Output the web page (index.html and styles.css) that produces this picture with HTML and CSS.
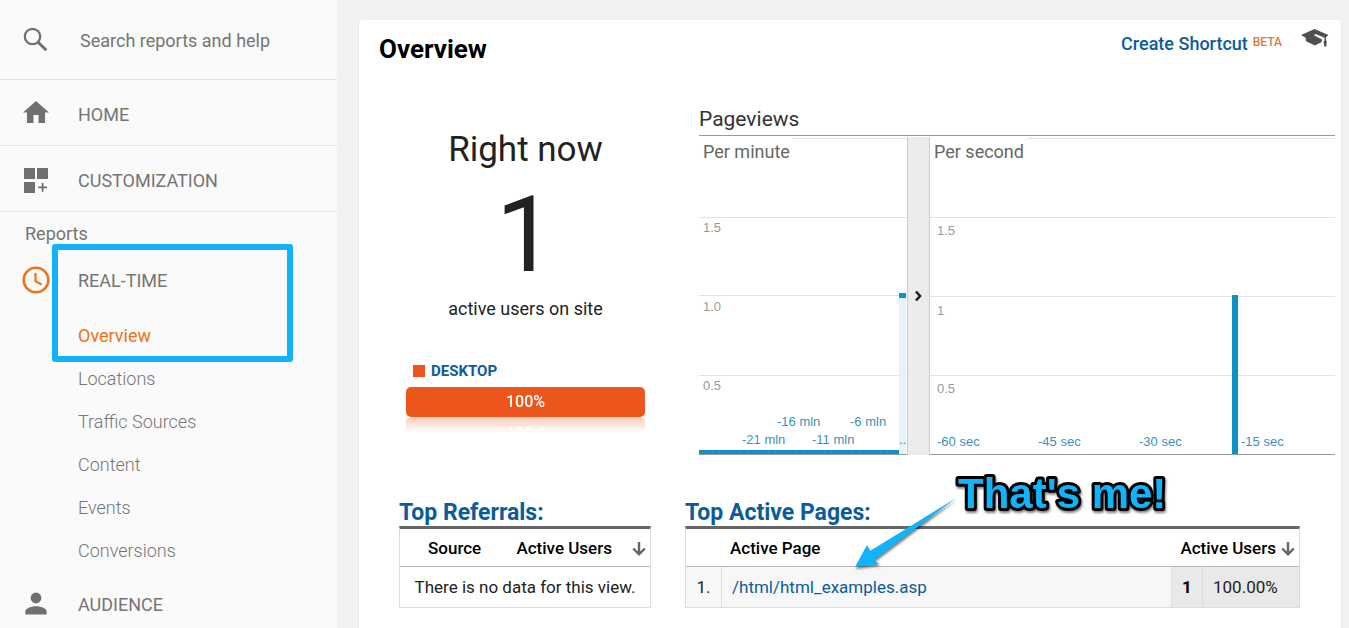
FILE: index.html
```
<!DOCTYPE html>
<html lang="en">
<head>
<meta charset="utf-8">
<title>Overview</title>
<link rel="stylesheet" href="styles.css">
</head>
<body>
<div class="app">
  <aside class="sidebar">
    <label class="search">
      <svg class="icon" viewBox="0 0 28 28" aria-hidden="true"><circle cx="10.500" cy="10.500" r="7.700" fill="none" stroke="currentColor" stroke-width="2.300"/><path d="M16 16L24.300 24.300" stroke="currentColor" stroke-width="3"/></svg>
      <input class="search-input" type="text" placeholder="Search reports and help" aria-label="Search reports and help">
    </label>
    <nav>
      <a class="nav-item ruled" href="#">
        <svg class="icon" viewBox="0 0 28 28" aria-hidden="true"><path d="M14 1L1 12.500h4V23h6.500v-8h5v8H23V12.500h4z" fill="currentColor"/></svg>
        HOME
      </a>
      <a class="nav-item ruled" href="#">
        <svg class="icon" viewBox="0 0 28 28" aria-hidden="true"><path d="M2 2h11v11H2zM15 2h11v11H15zM2 16h11v11H2zM19.700 17h1.800v3.500H25v1.800h-3.500v3.500h-1.800v-3.500h-3.500v-1.800h3.500z" fill="currentColor"/></svg>
        CUSTOMIZATION
      </a>
      <h2 class="nav-heading">Reports</h2>
      <div class="nav-group">
        <a class="nav-item realtime" href="#">
          <svg class="icon icon-active" viewBox="0 0 28 28" aria-hidden="true"><circle cx="14" cy="14" r="12.300" fill="none" stroke="currentColor" stroke-width="2.600"/><path d="M13.500 7v8.200l6 3.300" fill="none" stroke="currentColor" stroke-width="2.200"/></svg>
          REAL-TIME
        </a>
        <a class="sub-item current" href="#">Overview</a>
        <span class="highlight"></span>
      </div>
      <a class="sub-item" href="#">Locations</a>
      <a class="sub-item" href="#">Traffic Sources</a>
      <a class="sub-item" href="#">Content</a>
      <a class="sub-item" href="#">Events</a>
      <a class="sub-item" href="#">Conversions</a>
      <a class="nav-item audience" href="#">
        <svg class="icon" viewBox="0 0 28 28" aria-hidden="true"><circle cx="14" cy="8" r="5.400" fill="currentColor"/><path d="M3.300 24.500v-3c0-3.600 7.200-5.300 10.700-5.300s10.700 1.700 10.700 5.300v3z" fill="currentColor"/></svg>
        AUDIENCE
      </a>
    </nav>
  </aside>

  <main class="card">
    <header class="card-head">
      <h1 class="title">Overview</h1>
      <a class="shortcut" href="#">Create Shortcut</a>
      <span class="beta">BETA</span>
      <svg class="cap" viewBox="0 0 28 20" aria-hidden="true"><path d="M13.500 1L27.500 7l-2.500 2.300v3.200c1 .5 1 1.500.5 2.500v3.500h-2.200l-.5-3.500c-.5-1 0-2 .7-2.500V9.800L14.500 6l-1.500 1.200 8 4.300-.3 2.500-6.700 3.500-9-4.300-.3-3.400L0 7z" fill="#505050"/></svg>
    </header>

    <div class="summary">
      <section class="now">
        <p class="now-label">Right now</p>
        <p class="now-count">1</p>
        <p class="now-note">active users on site</p>
        <a class="device" href="#"><span class="swatch"></span>DESKTOP</a>
        <div class="bar">100%</div>
      </section>

      <section class="pageviews">
        <h2 class="chart-title">Pageviews</h2>
        <div class="charts">
          <svg class="plot-minute" viewBox="0 0 208 318">
            <path class="grid" d="M93 1.500H208M0 80.500H208M0 158.500H208M0 238.500H208"/>
            <text class="plot-title" x="4" y="21">Per minute</text>
            <text class="tick" x="4" y="95">1.5</text>
            <text class="tick" x="4" y="174">1.0</text>
            <text class="tick" x="4" y="253">0.5</text>
            <rect x="200" y="156" width="7" height="161" fill="#e4f2f9"/>
            <rect x="200" y="156" width="7" height="5" fill="#1090c5"/>
            <text class="time" x="78" y="289">-16 mln</text>
            <text class="time" x="151" y="289">-6 mln</text>
            <text class="time" x="43" y="307">-21 mln</text>
            <text class="time" x="113" y="307">-11 mln</text>
            <text class="time" x="200" y="307">..</text>
            <rect x="0" y="313" width="200" height="4" fill="#1090c5"/>
            <path d="M6 315H200" fill="none" stroke="#2498c9" stroke-width="3" stroke-dasharray="1 6"/>
            <path class="axis" d="M0 317.500H208"/>
          </svg>
          <button class="divider" type="button" aria-label="Collapse minute chart"><svg class="chevron" viewBox="0 0 8 12" aria-hidden="true"><path d="M1 1.500L5 6L1 10.500" fill="none" stroke="#222" stroke-width="2.600"/></svg></button>
          <svg class="plot-second" viewBox="0 0 405 318">
            <path class="grid" d="M97 1.500H405M0 80.500H405M0 159.500H405M0 238.500H405"/>
            <text class="plot-title" x="4" y="21">Per second</text>
            <text class="tick" x="7" y="98">1.5</text>
            <text class="tick" x="7" y="178">1</text>
            <text class="tick" x="7" y="256">0.5</text>
            <rect x="302" y="158" width="6" height="160" fill="#1090c5"/>
            <text class="time" x="7" y="309">-60 sec</text>
            <text class="time" x="108" y="309">-45 sec</text>
            <text class="time" x="209" y="309">-30 sec</text>
            <text class="time" x="311" y="309">-15 sec</text>
            <path class="axis" d="M0 317.500H405"/>
          </svg>
        </div>
      </section>
    </div>

    <div class="tables">
      <section>
        <h2 class="table-title">Top Referrals:</h2>
        <table class="table">
          <thead>
            <tr>
              <th class="source">Source</th>
              <th class="users">Active Users<svg class="sort" viewBox="0 0 14 14" aria-hidden="true"><path d="M7 0v12M1.200 6.500L7 12.300L12.800 6.500" fill="none" stroke="#666" stroke-width="2.400"/></svg></th>
            </tr>
          </thead>
          <tbody><tr><td class="empty" colspan="2">There is no data for this view.</td></tr></tbody>
        </table>
      </section>
      <section class="active-pages">
        <h2 class="table-title">Top Active Pages:</h2>
        <table class="table">
          <thead>
            <tr>
              <th class="rank"></th>
              <th class="page">Active Page</th>
              <th class="users" colspan="2">Active Users<svg class="sort" viewBox="0 0 14 14" aria-hidden="true"><path d="M7 0v12M1.200 6.500L7 12.300L12.800 6.500" fill="none" stroke="#666" stroke-width="2.400"/></svg></th>
            </tr>
          </thead>
          <tbody>
            <tr>
              <td class="rank">1.</td>
              <td class="page"><a href="#">/html/html_examples.asp</a></td>
              <td class="count">1</td>
              <td class="percent">100.00%</td>
            </tr>
          </tbody>
        </table>
        <svg class="callout" viewBox="0 0 350 110">
          <path class="callout-arrow" d="M115 32L33 94L38 98L14 101L26 79L29 85Z"/>
          <text class="callout-text" x="117" y="42">That's me!</text>
        </svg>
      </section>
    </div>
  </main>
</div>
</body>
</html>
```
FILE: styles.css
```
* { box-sizing: border-box; }
body {
  margin: 0;
  background: #f1f1f1;
  color: #222;
  font-family: Roboto, "Liberation Sans", sans-serif;
  font-size: 17px;
}
h1, h2, p { margin: 0; font-weight: 400; }
a { color: inherit; text-decoration: none; }

.app { display: flex; height: 100vh; overflow: hidden; }

/* Sidebar */
.sidebar { flex: 0 0 337px; background: #fafafa; color: #757575; font-size: 18px; }
.search, .nav-item { display: flex; align-items: center; gap: 28px; padding-left: 22px; }
.search { height: 80px; padding-top: 1px; border-bottom: 1px solid #e3e3e3; }
.search-input {
  flex: 1;
  min-width: 0;
  padding: 0 0 0 2px;
  border: 0;
  background: none;
  color: #757575;
  font: inherit;
}
.search-input::placeholder { color: #757575; opacity: 1; }
.icon { flex: none; width: 28px; height: 28px; color: #707070; }
.icon-active { color: #ef7215; }
.ruled { height: 66px; padding-top: 3px; border-bottom: 1px solid #e3e3e3; }
.nav-heading { padding: 12px 0 0 25px; font-size: 18px; line-height: 20px; }
.nav-group { position: relative; }
.realtime { height: 70px; padding-top: 2px; }
.sub-item { display: block; padding-left: 78px; font-weight: 300; line-height: 43px; }
.current { color: #ef7215; font-weight: 400; }
.audience { height: 64px; }
.highlight {
  position: absolute;
  top: 0;
  left: 52px;
  width: 241px;
  height: 118px;
  border: 6px solid #12b3fd;
  border-radius: 3px;
}

/* Card */
.card {
  flex: 1;
  min-width: 0;
  margin: 20px 8px 0 22px;
  border-radius: 3px 3px 0 0;
  background: #fff;
  box-shadow: 0 1px 2px rgba(0, 0, 0, 0.12);
}
.card-head { display: flex; height: 84px; padding: 8px 12px 0 20px; }
.title { flex: 1; color: #000; font-size: 26px; font-weight: 700; line-height: 42px; }
.shortcut { color: #0b5c9b; font-weight: 500; line-height: 32px; font-size: 18px; }
.beta { margin: 0 19px 0 5px; color: #dd7b38; font-size: 12px; font-weight: 500; line-height: 28px; }
.cap { width: 28px; height: 20px; }

/* Live count */
.summary { display: grid; grid-template-columns: 239px 1fr; gap: 54px; padding: 0 6px 0 47px; }
.now { text-align: center; }
.now-label { padding-top: 25px; font-size: 35px; line-height: 42px; }
.now-count { padding-top: 3px; font-size: 106px; line-height: 122px; }
.now-note { font-size: 18px; line-height: 26px; }
.device {
  display: flex;
  align-items: center;
  gap: 6px;
  margin-top: 40px;
  padding-left: 7px;
  color: #0b5c9b;
  font-size: 15px;
  font-weight: 700;
  line-height: 18px;
}
.swatch { width: 12px; height: 12px; background: #ed561b; }
.bar {
  margin-top: 7px;
  border-radius: 5px;
  background: #ed561b;
  color: #fff;
  font-size: 16px;
  font-weight: 500;
  line-height: 30px;
  -webkit-box-reflect: below 0 linear-gradient(to top, rgba(0, 0, 0, 0.3), transparent 52%);
}

/* Charts */
.chart-title { border-bottom: 1px solid #999; color: #333; font-size: 21px; line-height: 31px; }
.charts { display: flex; margin-top: 1px; }
.plot-minute { flex: 208 1 0; min-width: 0; }
.plot-second { flex: 405 1 0; min-width: 0; }
.divider {
  flex: 0 0 23px;
  padding: 0;
  border: 1px solid #ccc;
  border-width: 0 1px;
  background: #ececec;
}
.chevron { display: block; width: 8px; height: 12px; margin: 0 auto; }
.grid { fill: none; stroke: #e3e3e3; stroke-width: 1; }
.axis { fill: none; stroke: #999; stroke-width: 1; }
.plot-title { fill: #666; font-size: 18px; }
.tick, .time { font-family: "Liberation Sans", Arial, sans-serif; font-size: 13px; }
.tick { fill: #999; }
.time { fill: #3a92bd; }

/* Tables */
.tables { display: grid; grid-template-columns: 252px 1fr; gap: 34px; padding: 43px 41px 0 40px; }
.table-title { padding-top: 2px; color: #0b5c9b; font-size: 23px; font-weight: 700; line-height: 26px; }
.table {
  width: 100%;
  border: 1px solid #ddd;
  border-top: 3px solid #666;
  border-spacing: 0;
}
.table th, .table td { padding: 0; }
.table th {
  height: 38px;
  border-bottom: 1px solid #bbb;
  color: #000;
  font-size: 17px;
  font-weight: 500;
  text-align: left;
}
.table td { height: 40px; }
.table .source { padding-left: 28px; }
.table .empty { text-align: center; }
.table .users { padding-right: 4px; text-align: right; white-space: nowrap; }
.sort { width: 14px; height: 14px; margin-left: 20px; vertical-align: -2px; }
.active-pages { position: relative; }
.active-pages .sort { margin-left: 5px; }
.active-pages td { background: #f7f7f7; }
.table .rank { width: 36px; text-align: center; }
.table td.rank { border-right: 1px solid #ddd; }
.table th.page { padding-left: 8px; }
.table td.page { padding-left: 10px; color: #0b5c9b; }
.table .count, .table .percent { border-left: 1px solid #ddd; background: #e9e9e9; }
.table .count { width: 31px; color: #000; font-weight: 700; text-align: center; }
.table .percent { width: 97px; padding-left: 10px; }

/* Annotation */
.callout {
  position: absolute;
  top: -32px;
  left: 156px;
  width: 350px;
  height: 110px;
  filter: drop-shadow(1px 2px 1px rgba(0, 0, 0, 0.5));
  pointer-events: none;
}
.callout-arrow { fill: #12b3fd; }
.callout-text {
  fill: #12b3fd;
  stroke: #000;
  stroke-width: 6px;
  stroke-linejoin: round;
  paint-order: stroke;
  font-family: "Liberation Sans", Arial, sans-serif;
  font-size: 42px;
  font-weight: 700;
}
```
